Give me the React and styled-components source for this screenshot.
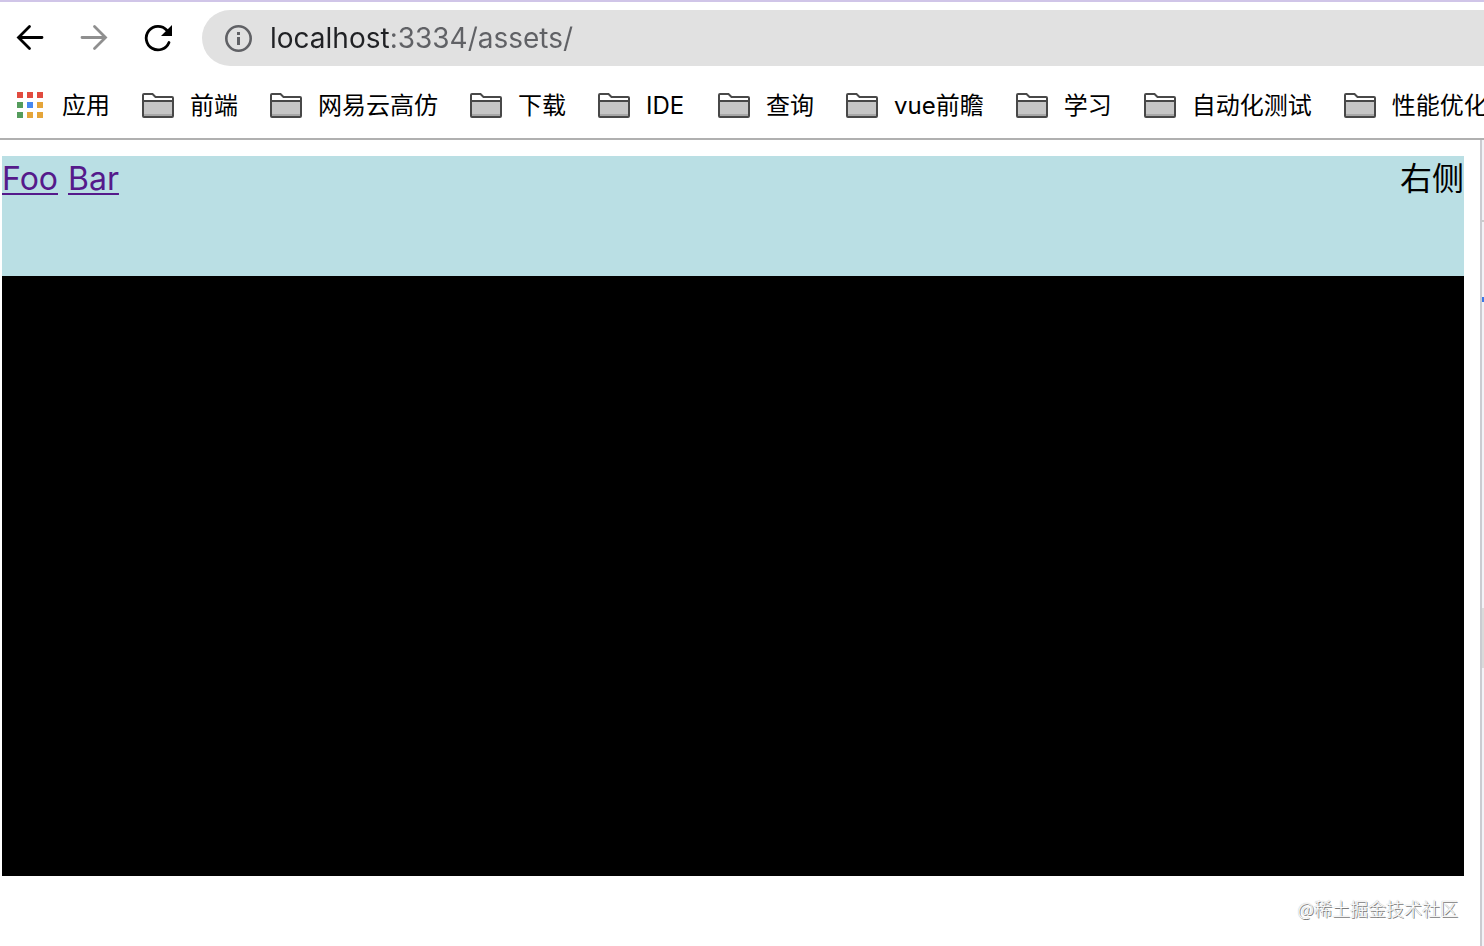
import styled, { createGlobalStyle } from "styled-components";

const GlobalStyle = createGlobalStyle`
  * {
    box-sizing: border-box;
  }

  body {
    margin: 0;
    background: #fff;
    color: #000;
    font-family: Inter, "Noto Sans CJK SC", sans-serif;
  }
`;

const Window = styled.div`
  display: flex;
  flex-direction: column;
  min-height: 100vh;
  overflow: hidden;
  border-top: 2px solid #d0c5e8;
`;

const Toolbar = styled.header`
  display: flex;
  align-items: center;
  padding: 8px 0 8px 14px;
`;

const NavButtons = styled.nav`
  display: flex;
  gap: 32px;
  margin-right: 28px;
`;

const NavButton = styled.button`
  display: flex;
  padding: 0;
  border: none;
  background: none;
  color: ${(props) => (props.disabled ? "#8f8f8f" : "#000")};
`;

const AddressBar = styled.label`
  display: flex;
  flex: 1;
  align-items: center;
  gap: 16px;
  height: 56px;
  padding-left: 22px;
  border-radius: 28px 0 0 28px;
  background: #e1e1e1;
`;

// the host part of the url is darker than the port and path
const AddressInput = styled.input`
  flex: 1;
  padding: 0;
  border: none;
  outline: none;
  font-family: Inter, sans-serif;
  font-size: 28px;
  line-height: 36px;
  color: transparent;
  background: linear-gradient(to right, #202124 120px, #606165 120px);
  background-clip: text;
`;

const BookmarksBar = styled.nav`
  display: flex;
  align-items: center;
  gap: 32px;
  height: 66px;
  padding: 0 0 2px 14px;
  border-bottom: 2px solid #b0b0b0;
`;

const Bookmark = styled.a`
  display: flex;
  flex-shrink: 0;
  align-items: center;
  gap: 16px;
  color: #000;
  text-decoration: none;
`;

const BookmarkLabel = styled.span`
  min-width: 40px;
  padding-top: 2px;
  font-size: 24px;
  line-height: 32px;
  white-space: nowrap;
`;

const Content = styled.div`
  display: flex;
  flex: 1;
`;

const Page = styled.main`
  flex: 1;
  padding: 16px 16px 0 2px;
  font-size: 32px;
  line-height: 46px;
`;

const Header = styled.div`
  display: flex;
  justify-content: space-between;
  height: 120px;
  background: #badfe4;
`;

const Links = styled.div`
  display: flex;
  gap: 10px;
`;

const PageLink = styled.a`
  color: #551a8b;
  text-decoration: underline;
  text-decoration-thickness: 2px;
  text-underline-offset: 3px;
`;

const Main = styled.div`
  height: 600px;
  background: #000;
`;

const Watermark = styled.p`
  margin: 18px 6px 0 0;
  font-family: "Noto Sans CJK SC", sans-serif;
  font-size: 18px;
  font-weight: 300;
  line-height: 28px;
  text-align: right;
  color: #fff;
  text-shadow: 0 0 1px #999, 1px 1px 0 #777;
`;

const DevTools = styled.aside`
  display: flex;
  flex-direction: column;
  width: 4px;
  border-left: 2px solid #cbcbd0;
  background: #f2f2f6;
`;

const DevToolsPart = styled.div`
  height: ${(props) => props.$height}px;
  background: ${(props) => props.$color || "transparent"};
`;

const devToolsParts = [
  { height: 80 },
  { height: 2, color: "#cccccc" },
  { height: 75 },
  { height: 5, color: "#3b78e7" },
  { height: 306 },
  { height: 60, color: "#dadada" },
];

const folders = [
  "前端",
  "网易云高仿",
  "下载",
  "IDE",
  "查询",
  "vue前瞻",
  "学习",
  "自动化测试",
  "性能优化",
];

const appColors = [
  "#e14b3f",
  "#e14b3f",
  "#e14b3f",
  "#559c5c",
  "#4688f1",
  "#e5a53a",
  "#559c5c",
  "#e5a53a",
  "#e5a53a",
];

const ArrowIcon = ({ forward }) => (
  <svg width="32" height="32" viewBox="0 0 32 32" fill="none">
    <path
      d={
        forward
          ? "M4 15.5H27M16.5 4.5L27.5 15.5L16.5 26.5"
          : "M28 15.5H5M15.5 4.5L4.5 15.5L15.5 26.5"
      }
      stroke="currentColor"
      strokeWidth="2.8"
      strokeLinecap="round"
    />
  </svg>
);

const ReloadIcon = () => (
  <svg width="32" height="32" viewBox="0 0 32 32" fill="none">
    <path
      d="M27 20.5A11.8 11.8 0 1 1 24.8 8.2"
      stroke="currentColor"
      strokeWidth="2.8"
      strokeLinecap="round"
    />
    <path d="M30 3V14H19Z" fill="currentColor" />
  </svg>
);

const InfoIcon = () => (
  <svg width="30" height="30" viewBox="0 0 30 30" fill="none">
    <circle cx="14.5" cy="15.5" r="12.2" stroke="#606165" strokeWidth="2.6" />
    <path d="M13 9h3v3h-3zM13 14h3v8h-3z" fill="#606165" />
  </svg>
);

const AppsIcon = () => (
  <svg width="32" height="32" viewBox="0 0 32 32">
    {appColors.map((color, i) => (
      <rect
        key={i}
        x={3 + (i % 3) * 10}
        y={3 + Math.floor(i / 3) * 10}
        width="6"
        height="6"
        fill={color}
      />
    ))}
  </svg>
);

const FolderIcon = () => (
  <svg width="32" height="26" viewBox="0 0 32 26">
    <path
      d="M1 3a1 1 0 0 1 1-1H10.5L13.5 5H30a1 1 0 0 1 1 1V24a1 1 0 0 1-1 1H2a1 1 0 0 1-1-1Z"
      fill="#fff"
    />
    <path d="M2 9H30V24H2Z" fill="#c6c6c6" />
    <path d="M2 22H30V24H2Z" fill="#a8a8a8" />
    <path
      d="M1 3a1 1 0 0 1 1-1H10.5L13.5 5H30a1 1 0 0 1 1 1V24a1 1 0 0 1-1 1H2a1 1 0 0 1-1-1ZM1 9H31"
      fill="none"
      stroke="#484848"
      strokeWidth="2"
    />
  </svg>
);

const App = () => {
  return (
    <>
      <GlobalStyle />
      <Window>
        <Toolbar>
          <NavButtons>
            <NavButton aria-label="Back">
              <ArrowIcon />
            </NavButton>
            <NavButton aria-label="Forward" disabled>
              <ArrowIcon forward />
            </NavButton>
            <NavButton aria-label="Reload">
              <ReloadIcon />
            </NavButton>
          </NavButtons>
          <AddressBar>
            <InfoIcon />
            <AddressInput
              type="text"
              aria-label="Address"
              defaultValue="localhost:3334/assets/"
            />
          </AddressBar>
        </Toolbar>
        <BookmarksBar>
          <Bookmark href="#apps">
            <AppsIcon />
            <BookmarkLabel>应用</BookmarkLabel>
          </Bookmark>
          {folders.map((folder) => (
            <Bookmark key={folder} href="#folder">
              <FolderIcon />
              <BookmarkLabel>{folder}</BookmarkLabel>
            </Bookmark>
          ))}
        </BookmarksBar>
        <Content>
          <Page>
            <Header>
              <Links>
                <PageLink href="#foo">Foo</PageLink>
                <PageLink href="#bar">Bar</PageLink>
              </Links>
              <div>右侧</div>
            </Header>
            <Main />
            <Watermark>@稀土掘金技术社区</Watermark>
          </Page>
          <DevTools>
            {devToolsParts.map((part, i) => (
              <DevToolsPart key={i} $height={part.height} $color={part.color} />
            ))}
          </DevTools>
        </Content>
      </Window>
    </>
  );
};

export default App;
